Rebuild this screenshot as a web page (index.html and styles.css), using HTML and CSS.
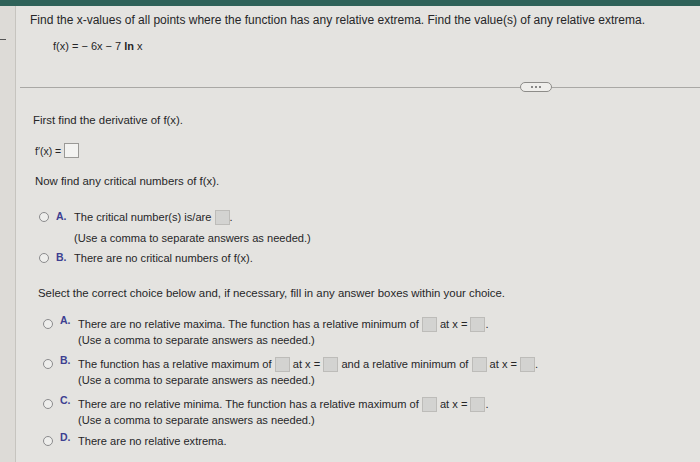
FILE: index.html
```html
<!DOCTYPE html>
<html>
<head>
<meta charset="utf-8">
<link rel="stylesheet" href="styles.css">
</head>
<body>
<div class="topbar"></div>
<div class="page">
  <div class="gutter"><span class="dash"></span></div>
  <div class="main">
    <div class="question">
      <p class="prompt">Find the x-values of all points where the function has any relative extrema. Find the value(s) of any relative extrema.</p>
      <p class="formula">f(x) = − 6x − 7 <b>ln</b> x</p>
    </div>
    <div class="sep"><span class="line short"></span><span class="more"><i></i><i></i><i></i></span><span class="line"></span></div>
    <div class="part p1">
      <p>First find the derivative of f(x).</p>
      <p class="deriv">f′(x) = <span class="box white"></span></p>
      <p class="now">Now find any critical numbers of f(x).</p>
      <div class="opts opts1">
        <div class="opt"><span class="radio"></span><span class="lab">A.</span>
          <div class="txt"><div>The critical number(s) is/are <span class="box"></span>.</div><div>(Use a comma to separate answers as needed.)</div></div></div>
        <div class="opt"><span class="radio"></span><span class="lab">B.</span>
          <div class="txt"><div>There are no critical numbers of f(x).</div></div></div>
      </div>
    </div>
    <div class="part p2">
      <p>Select the correct choice below and, if necessary, fill in any answer boxes within your choice.</p>
      <div class="opts opts2">
        <div class="opt"><span class="radio"></span><span class="lab">A.</span>
          <div class="txt"><div>There are no relative maxima. The function has a relative minimum of <span class="box"></span> at x = <span class="box"></span>.</div><div>(Use a comma to separate answers as needed.)</div></div></div>
        <div class="opt"><span class="radio"></span><span class="lab">B.</span>
          <div class="txt"><div>The function has a relative maximum of <span class="box"></span> at x = <span class="box"></span> and a relative minimum of <span class="box"></span> at x = <span class="box"></span>.</div><div>(Use a comma to separate answers as needed.)</div></div></div>
        <div class="opt"><span class="radio"></span><span class="lab">C.</span>
          <div class="txt"><div>There are no relative minima. The function has a relative maximum of <span class="box"></span> at x = <span class="box"></span>.</div><div>(Use a comma to separate answers as needed.)</div></div></div>
        <div class="opt"><span class="radio"></span><span class="lab">D.</span>
          <div class="txt"><div>There are no relative extrema.</div></div></div>
      </div>
    </div>
  </div>
</div>
</body>
</html>
```
FILE: styles.css
```css
html, body { margin: 0; padding: 0; }
body {
  width: 700px; height: 462px; overflow: hidden;
  background: #e4e3e0;
  font-family: "Liberation Sans", Arial, sans-serif;
  font-size: 12px;
  color: #262628;
}
p { margin: 0; }
.topbar { height: 6px; background: #2f6259; }
.page { display: flex; height: 456px; }
.gutter {
  width: 15px; flex: none;
  background: #dddbd7;
  border-right: 1px solid #c6c4bf;
  position: relative;
}
.dash { position: absolute; left: 0; top: 33px; width: 6px; height: 1px; background: #555; }
.main { flex: 1; min-width: 0; }
.question { padding: 7px 0 0 14px; line-height: 14px; }
.formula { margin: 12px 0 0 23px; font-size: 11px; }
.formula b { font-weight: bold; }
.sep { display: flex; align-items: center; margin: 29px 0 0 4px; }
.line { flex: 1; height: 1px; background: #a9a8a5; }
.line.short { flex: none; width: 500px; }
.more {
  flex: none; width: 30px; height: 8px; border: 1px solid #8d8c89; border-radius: 5px;
  background: #efeeeb; display: flex; justify-content: center; align-items: center; gap: 2px;
}
.more i { width: 2px; height: 2px; border-radius: 1px; background: #666; }
.part { line-height: 14px; font-size: 11.4px; }
.p1 { padding: 21px 0 0 17px; }
.deriv { margin-top: 15px; font-size: 10.5px; display: flex; align-items: center; gap: 3px; padding-left: 2px; height: 17px; }
.now { margin-top: 15px; padding-left: 2px; }
.box {
  display: inline-block; vertical-align: -4px;
  background: #d3d3d1; border: 1px solid #bdbcb9; box-sizing: border-box; width: 15px; height: 15px;
}
.box.white { background: #f3f3f1; border-color: #9a9996; }
.opts { display: flex; flex-direction: column; font-size: 11.1px; }
.opt { display: flex; align-items: flex-start; }
.radio {
  flex: none; width: 10px; height: 10px; border-radius: 50%; box-sizing: border-box;
  border: 1.5px solid #8b8b8d; background: #eeeeec; margin-top: 3px;
}
.lab { flex: none; width: 18px; margin-left: 7px; color: #3d3f91; font-weight: bold; font-size: 10.5px; }
.txt { line-height: 16px; }
.opts1 { margin: 21px 0 0 6px; gap: 4px; }
.opts1 .txt > div + div { margin-top: 5px; }
.p2 { padding: 20px 0 0 22px; }
.opts2 { margin: 16px 0 0 5px; gap: 8px; }
.opts2 .opt:last-child { margin-top: -3px; }
.opts2 .lab { margin-top: -3px; }
.opts2 .txt > div + div { margin-top: 0; }
```
